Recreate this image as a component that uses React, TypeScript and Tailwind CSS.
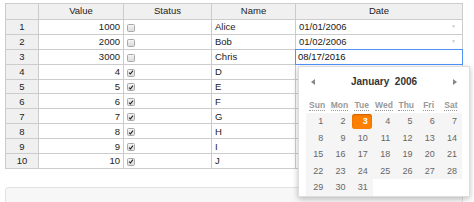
import React from "react";

const rows = [
  { v: 1000, c: false, n: "Alice", d: "01/01/2006" },
  { v: 2000, c: false, n: "Bob", d: "01/02/2006" },
  { v: 3000, c: false, n: "Chris", d: "08/17/2016" },
  { v: 4, c: true, n: "D", d: "" },
  { v: 5, c: true, n: "E", d: "" },
  { v: 6, c: true, n: "F", d: "" },
  { v: 7, c: true, n: "G", d: "" },
  { v: 8, c: true, n: "H", d: "" },
  { v: 9, c: true, n: "I", d: "" },
  { v: 10, c: true, n: "J", d: "" },
];

const days = ["Sun", "Mon", "Tue", "Wed", "Thu", "Fri", "Sat"];

function Checkbox({ checked }: { checked: boolean }) {
  return (
    <span className="inline-flex w-[8px] h-[8px] rounded-[1.5px] border border-[#a8a8a8] bg-gradient-to-b from-[#f4f4f4] to-[#dcdcdc] items-center justify-center align-middle">
      {checked && (
        <svg viewBox="0 0 8 8" className="w-[7px] h-[7px]">
          <path d="M1.5 4.2 L3.2 6 L6.6 1.6" stroke="#222" strokeWidth="1.5" fill="none" />
        </svg>
      )}
    </span>
  );
}

function DatePicker() {
  // January 2006 starts on a Sunday
  const weeks: (number | null)[][] = [];
  let d = 1;
  for (let w = 0; w < 5; w++) {
    const wk: (number | null)[] = [];
    for (let i = 0; i < 7; i++) {
      wk.push(d <= 31 ? d : null);
      d++;
    }
    weeks.push(wk);
  }
  return (
    <div className="absolute left-[298px] top-[66px] w-[172px] h-[131px] bg-white border border-[#ddd] shadow-[0_2px_6px_rgba(0,0,0,0.25)] px-[7px] pt-[6px]">
      <div className="flex items-center justify-between h-[17px] px-[5px]">
        <span className="w-0 h-0 border-y-[3px] border-y-transparent border-r-[4px] border-r-[#888]" />
        <span className="text-[10px] font-bold text-[#333]">January&nbsp;&nbsp;2006</span>
        <span className="w-0 h-0 border-y-[3px] border-y-transparent border-l-[4px] border-l-[#888]" />
      </div>
      <div className="grid grid-cols-7 mt-[9px] h-[14px]">
        {days.map((n) => (
          <span key={n} className="text-center text-[8.5px] font-bold text-[#999] leading-[12px]">
            <span className="border-b border-dotted border-[#999]">{n}</span>
          </span>
        ))}
      </div>
      <div className="grid grid-cols-7">
        {weeks.flat().map((n, i) =>
          n === null ? (
            <span key={i} className="h-[16.6px]" />
          ) : n === 3 ? (
            <span key={i} className="h-[16.6px] bg-[#f5f5f5] flex">
              <span className="flex-1 m-[1px] rounded-[3px] bg-[#ff8000] text-white font-bold text-[9px] text-right pr-[4px] leading-[14.6px] shadow-[inset_0_1px_2px_#c66300]">
                {n}
              </span>
            </span>
          ) : (
            <span key={i} className="h-[16.6px] bg-[#f5f5f5] text-[9px] text-[#666] text-right pr-[5px] leading-[16.6px]">
              {n}
            </span>
          )
        )}
      </div>
    </div>
  );
}

export default function App() {
  return (
    <div className="relative w-[474px] h-[202px] bg-white overflow-hidden font-['Liberation_Sans',Arial,sans-serif] text-[9.5px] text-[#222]">
      <div className="pl-[5px] pt-[3px]">
        <table className="border-separate border-spacing-0 table-fixed w-[458px]">
          <colgroup>
            <col className="w-[34px]" />
            <col className="w-[85px]" />
            <col className="w-[88px]" />
            <col className="w-[84px]" />
            <col className="w-[167px]" />
          </colgroup>
          <thead>
            <tr className="h-[17px]">
              <th className="bg-[#f0f0f0] border border-[#ccc] font-normal" />
              {["Value", "Status", "Name", "Date"].map((h) => (
                <th key={h} className="bg-[#f0f0f0] border-t border-r border-b border-[#ccc] font-normal text-center p-0">
                  {h}
                </th>
              ))}
            </tr>
          </thead>
          <tbody>
            {rows.map((r, i) => (
              <tr key={i} className="h-[14.9px]">
                <td className="bg-[#f0f0f0] border-l border-r border-b border-[#ccc] text-center p-0 leading-[13px]">
                  {i + 1}
                </td>
                <td className="border-r border-b border-[#ccc] text-right pr-[3px] p-0 leading-[13px]">{r.v}</td>
                <td className="border-r border-b border-[#ccc] pl-[3px] p-0 leading-[13px]">
                  <Checkbox checked={r.c} />
                </td>
                <td className="border-r border-b border-[#ccc] pl-[3px] p-0 leading-[13px]">{r.n}</td>
                {i === 2 ? (
                  <td className="border-r border-b border-[#ccc] p-0 leading-[13px] relative">
                    <div className="absolute -left-[1px] -top-[1px] right-[-1px] bottom-[-1px] border-[1.5px] border-[#5292f7] bg-white pl-[2px] text-[#111] flex items-center">
                      {r.d}
                    </div>
                  </td>
                ) : (
                  <td className="border-r border-b border-[#ccc] pl-[3px] pr-[6px] p-0 leading-[13px]">
                    <div className="flex items-center justify-between">
                      <span>{r.d}</span>
                      {r.d && <span className="text-[5px] text-[#ccc]">▼</span>}
                    </div>
                  </td>
                )}
              </tr>
            ))}
          </tbody>
        </table>
        <div className="mt-[18px] w-[458px] h-[30px] bg-[#f7f7f7] border border-[#e2e2e2] rounded-[3px]" />
      </div>
      <DatePicker />
    </div>
  );
}
